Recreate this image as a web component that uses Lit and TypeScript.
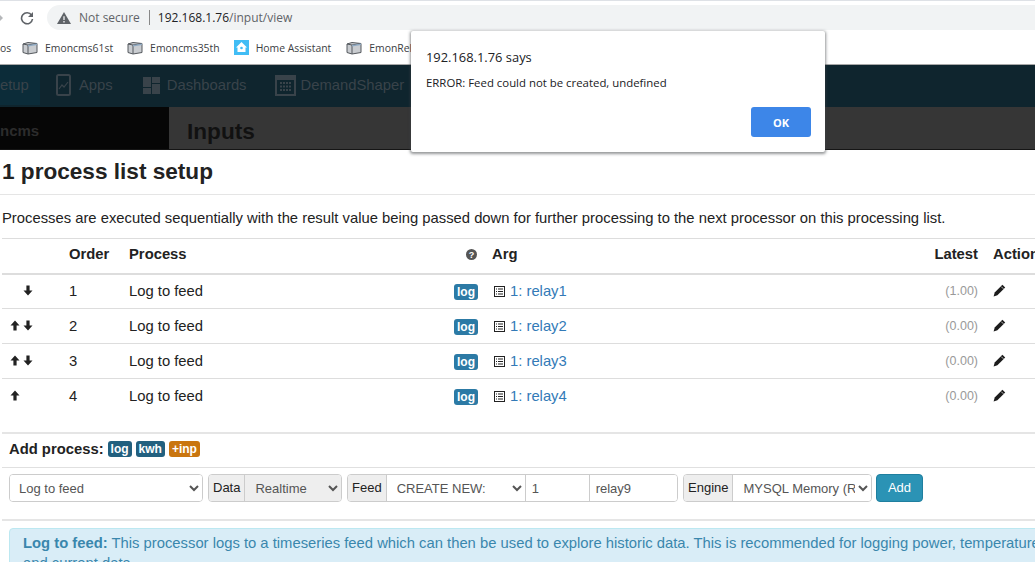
import { LitElement, html, css } from "lit";
import { customElement } from "lit/decorators.js";

const box = html`<svg class="bm-ic" width="16" height="14" viewBox="0 0 16 14"><path d="M1 3 L6 1.5 L15 2.5 L15 11.5 L6 13 L1 11.5Z" fill="#c9ccd0" stroke="#55595e"/><path d="M6 4 L6 13 M1 3 L6 4 L15 2.5" fill="none" stroke="#55595e"/><path d="M6 4 L15 2.5 L15 4 L6 5.5Z" fill="#8fa9c2"/></svg>`;
const up = html`<svg class="arrow" width="10" height="11" viewBox="0 0 10 11"><path d="M5 0.5 L9.5 5.5 L6.6 5.5 L6.6 10.5 L3.4 10.5 L3.4 5.5 L0.5 5.5Z" fill="#222"/></svg>`;
const down = html`<svg class="arrow" width="10" height="11" viewBox="0 0 10 11"><path d="M5 10.5 L9.5 5.5 L6.6 5.5 L6.6 0.5 L3.4 0.5 L3.4 5.5 L0.5 5.5Z" fill="#222"/></svg>`;
const list = html`<svg class="list" width="11" height="11" viewBox="0 0 11 11"><rect x="0.5" y="0.5" width="10" height="10" fill="#fff" stroke="#222"/><path d="M2 3h1M4 3h5M2 5.5h1M4 5.5h5M2 8h1M4 8h5" stroke="#222" stroke-width="1.2"/></svg>`;
const pencil = html`<svg class="pen" width="13" height="13" viewBox="0 0 13 13"><path d="M9.4 0.8 L12.2 3.6 L4.4 11.3 L0.6 12.4 L1.7 8.6Z" fill="#1c1c1c"/><path d="M8.2 2.6 L10.4 4.8" stroke="#fff" stroke-width=".7"/></svg>`;

const rows = [
  { u: false, d: true, n: 1, a: "1: relay1", v: "(1.00)" },
  { u: true, d: true, n: 2, a: "1: relay2", v: "(0.00)" },
  { u: true, d: true, n: 3, a: "1: relay3", v: "(0.00)" },
  { u: true, d: false, n: 4, a: "1: relay4", v: "(0.00)" },
];

@customElement("app-root")
export class AppRoot extends LitElement {
  static styles = css`
    :host { display: block; position: relative; width: 1035px; height: 562px; overflow: hidden; background: #fff; font-family: "Liberation Sans", Arial, sans-serif; color: #222; }
    .toolbar { height: 33px; box-sizing: border-box; padding-top: 5px; display: flex; align-items: flex-start; background: linear-gradient(#dee1e6 0 1px, #fff 1px); }
    .fwd { width: 20px; height: 25px; display: flex; align-items: center; flex: none; }
    .reload { width: 27px; height: 25px; display: flex; align-items: center; flex: none; }
    .omni { flex: 1; height: 25px; background: #f1f3f4; border-radius: 13px 0 0 13px; display: flex; align-items: center; padding-left: 10px; font-family: "Open Sans", sans-serif; font-size: 12px; }
    .ns { color: #5f6368; margin-left: 8px; }
    .sep { width: 1px; height: 15px; background: #888; margin: 0 8px 0 9px; }
    .url { color: #202124; } .url span { color: #5f6368; }
    .bookmarks { height: 32px; box-sizing: border-box; display: flex; align-items: center; font-family: "Open Sans", sans-serif; font-size: 10.4px; color: #3c4043; border-bottom: 1px solid #a8a8a8; padding-bottom: 2px; }
    .bm { display: flex; align-items: center; gap: 7px; }
    .os { width: 22px; }
    .b2 { margin-left: 14px; }
    .b3 { margin-left: 14px; }
    .b4 { margin-left: 15px; }
    .nav { height: 42px; box-sizing: border-box; padding-bottom: 2px; background: #0f252e; display: flex; color: #39434a; font-size: 14.8px; }
    .nav .item { display: flex; align-items: center; gap: 7px; }
    .active { width: 40px; background: #0c2c39; height: 40px; display: flex; align-items: center; }
    .apps { margin-left: 16px; gap: 8px !important; }
    .dash { margin-left: 30px; }
    .dem { margin-left: 28px; gap: 5px !important; }
    .sub { height: 43px; display: flex; border-bottom: 1px solid #151515; box-sizing: border-box; }
    .brand { width: 169px; background: #060606; color: #2c2c2c; font-weight: 700; font-size: 15px; line-height: 47px; }
    .inputs { flex: 1; background: #363636; color: #111; font-weight: 700; font-size: 22.6px; padding-left: 18px; line-height: 50px; }
    h2 { margin: 0; font-size: 22.6px; line-height: 44px; height: 45px; box-sizing: border-box; padding-left: 2px; border-bottom: 1px solid #e5e5e5; color: #222; }
    p { margin: 0; height: 43px; line-height: 47px; font-size: 14.8px; padding-left: 2px; white-space: nowrap; color: #222; }
    table { border-collapse: collapse; table-layout: fixed; width: 1084px; margin-left: 2px; font-size: 14.8px; }
    th { text-align: left; font-weight: 700; padding: 0 8px 3px; height: 35px; border-top: 1px solid #ddd; border-bottom: 2px solid #ddd; box-sizing: border-box; }
    td { padding: 0 8px 1px; height: 35px; border-bottom: 1px solid #ddd; box-sizing: border-box; }
    tr:last-child td { border-bottom: 0; }
    th.act, td.act { padding-left: 7px; }
    .c1 { width: 59px; } .c2 { width: 60px; } .c3 { width: 363px; } .c4 { width: 502px; } .c5 { width: 100px; }
    .proc { position: relative; }
    .between { display: flex; justify-content: space-between; align-items: center; }
    .arrows { display: flex; gap: 3px; }
    .arrows .gap { width: 10px; }
    .arrow, .pen { display: block; }
    .badge { display: inline-block; font-size: 12px; font-weight: 700; color: #fff; background: #2c7aa5; border-radius: 3px; line-height: 16px; padding: 0 3px; }
    td .badge { position: relative; top: 1px; margin-right: -2px; }
    .dark { background: #22607f; }
    .orange { background: #c9750f; }
    .qm { position: absolute; right: 7px; top: 10px; display: inline-flex; width: 11px; height: 11px; border-radius: 50%; background: #555; color: #fff; font-size: 9px; font-weight: 700; align-items: center; justify-content: center; }
    a { color: #337ab7; text-decoration: none; }
    .list { margin: 0 5px 0 2px; vertical-align: -1px; }
    .val { color: #999; font-size: 12.5px; padding-top: 1px; }
    .add { margin-top: 18px; border-top: 2px solid #e5e5e5; height: 36px; box-sizing: border-box; border-bottom: 1px solid #e0e0e0; margin-left: 2px; padding: 0 0 2px 7px; display: flex; align-items: center; gap: 4px; font-weight: 700; font-size: 14.8px; }
    .form { display: flex; gap: 5px; margin: 6px 0 0 9px; height: 28px; font-size: 13px; }
    .group { display: flex; border: 1px solid #ccc; border-radius: 4px; overflow: hidden; box-sizing: border-box; height: 28px; background: #fff; }
    .lab { background: #eee; border-right: 1px solid #ccc; padding: 0 4px; line-height: 26px; color: #222; }
    select, input { border: 0; outline: 0; background: #fff; color: #555; font: inherit; height: 26px; box-sizing: border-box; margin: 0; border-radius: 0; padding-top: 1px; }
    select { padding-left: 6px; }
    .grey { background: #eee; }
    input { padding: 1px 6px 0; }
    input + input, select + input { border-left: 1px solid #ccc; }
    .g1 { width: 194px; } .g1 select { width: 100%; padding-left: 5px; }
    .g2 { width: 134px; } .g2 select, .g4 select { flex: 1; min-width: 0; }
    .g3 { width: 331px; } .g3 select { width: 138px; }
    .g4 { width: 189px; }
    .num { width: 64px; } .name { flex: 1; min-width: 0; }
    .btn { margin-left: -1px; width: 47px; height: 28px; background: #2b93b5; border: 1px solid #1f7f9f; border-radius: 4px; color: #fff; font: inherit; padding: 0; }
    .rule { margin: 17px 0 0 2px; border-top: 2px solid #e5e5e5; }
    .alert { margin: 7px 0 0 9px; width: 1173px; background: #d9edf7; border: 1px solid #bce8f1; border-radius: 4px; color: #3a87ad; padding: 4px 13px; font-size: 14.8px; line-height: 20px; box-sizing: border-box; }
    .dialog { position: absolute; left: 411px; top: 31px; width: 414px; height: 121px; background: #fff; border-radius: 2px; box-shadow: 0 1px 3px 1px rgba(60,64,67,.55); font-family: "Open Sans", sans-serif; color: #202124; box-sizing: border-box; padding: 16px 15px 0; }
    .dialog .t { font-size: 12.9px; line-height: 20px; }
    .dialog .m { font-size: 11.4px; line-height: 18px; margin-top: 7px; }
    .ok { position: absolute; right: 14px; bottom: 15px; width: 60px; height: 30px; background: #3d86e8; border: 0; border-radius: 3px; color: #fff; font: 700 11px "Open Sans", sans-serif; padding: 0; }
  `;

  render() {
    return html`
      <div class="toolbar">
        <div class="fwd"><svg width="4" height="10" viewBox="0 0 4 10"><path d="M-2 0 L3 5 L-2 10Z" fill="#b5b7ba"/></svg></div>
        <div class="reload"><svg width="14" height="14" viewBox="0 0 14 14"><path d="M11.6 4.2 A5.5 5.5 0 1 0 12.5 8" fill="none" stroke="#5f6368" stroke-width="1.6"/><path d="M13 1 V6 H8Z" fill="#5f6368"/></svg></div>
        <div class="omni">
          <svg width="14" height="12" viewBox="0 0 14 12"><path d="M7 0 L14 12 H0Z" fill="#5f6368"/><path d="M7 4.2V8M7 9v1.4" stroke="#f1f3f4" stroke-width="1.3"/></svg>
          <span class="ns">Not secure</span><i class="sep"></i>
          <span class="url">192.168.1.76<span>/input/view</span></span>
        </div>
      </div>
      <div class="bookmarks">
        <span class="os">os</span>
        <div class="bm">${box}Emoncms61st</div>
        <div class="bm b2">${box}Emoncms35th</div>
        <div class="bm b3"><svg width="15" height="15" viewBox="0 0 15 15"><rect width="15" height="15" fill="#41bdf5"/><path d="M7.5 2 L13 7.5 H11.5 V12 H3.5 V7.5 H2Z" fill="#fff"/><circle cx="7.5" cy="8" r="1.3" fill="#41bdf5"/></svg>Home Assistant</div>
        <div class="bm b4">${box}EmonRel</div>
      </div>
      <div class="nav">
        <div class="active">etup</div>
        <div class="item apps"><svg width="15" height="22" viewBox="0 0 15 22"><rect x="1" y="1" width="13" height="20" rx="1.5" fill="none" stroke="#39434a" stroke-width="2"/><path d="M3 15 L6 11 L8 13 L12 8" fill="none" stroke="#39434a" stroke-width="1.2"/></svg>Apps</div>
        <div class="item dash"><svg width="17" height="17" viewBox="0 0 17 17" fill="#39434a"><rect width="8" height="10"/><rect x="9" width="8" height="6"/><rect y="11" width="8" height="6"/><rect x="9" y="7" width="8" height="10"/></svg>Dashboards</div>
        <div class="item dem"><svg width="21" height="22" viewBox="0 0 21 22"><rect x="1" y="2" width="19" height="19" fill="none" stroke="#39434a" stroke-width="2"/><rect x="1" y="2" width="19" height="4" fill="#39434a"/><path d="M5 9h11M5 12.5h11M5 16h11" stroke="#39434a" stroke-width="2" stroke-dasharray="2 1"/></svg>DemandShaper</div>
      </div>
      <div class="sub"><div class="brand">ncms</div><div class="inputs">Inputs</div></div>
      <h2>1 process list setup</h2>
      <p>Processes are executed sequentially with the result value being passed down for further processing to the next processor on this processing list.</p>
      <table>
        <colgroup><col class="c1"/><col class="c2"/><col class="c3"/><col class="c4"/><col class="c5"/></colgroup>
        <thead><tr>
          <th></th><th>Order</th>
          <th class="proc">Process<span class="qm">?</span></th>
          <th><div class="between"><span>Arg</span><span>Latest</span></div></th>
          <th class="act">Action</th>
        </tr></thead>
        <tbody>
          ${rows.map((r) => html`<tr>
            <td><div class="arrows">${r.u ? up : html`<span class="gap"></span>`}${r.d ? down : ""}</div></td>
            <td>${r.n}</td>
            <td><div class="between"><span>Log to feed</span><span class="badge">log</span></div></td>
            <td><div class="between"><span>${list}<a>${r.a}</a></span><span class="val">${r.v}</span></div></td>
            <td class="act">${pencil}</td>
          </tr>`)}
        </tbody>
      </table>
      <div class="add"><b>Add process:</b><span class="badge dark">log</span><span class="badge dark">kwh</span><span class="badge orange">+inp</span></div>
      <div class="form">
        <div class="group g1"><select><option>Log to feed</option></select></div>
        <div class="group g2"><span class="lab">Data</span><select class="grey"><option>Realtime</option></select></div>
        <div class="group g3"><span class="lab">Feed</span><select><option>CREATE NEW:</option></select><input class="num" value="1"/><input class="name" value="relay9"/></div>
        <div class="group g4"><span class="lab">Engine</span><select><option>MYSQL Memory (RAM data)</option></select></div>
        <button class="btn">Add</button>
      </div>
      <div class="rule"></div>
      <div class="alert"><b>Log to feed:</b> This processor logs to a timeseries feed which can then be used to explore historic data. This is recommended for logging power, temperature, humidity, voltage and current data.</div>
      <div class="dialog">
        <div class="t">192.168.1.76 says</div>
        <div class="m">ERROR: Feed could not be created, undefined</div>
        <button class="ok">OK</button>
      </div>
    `;
  }
}
